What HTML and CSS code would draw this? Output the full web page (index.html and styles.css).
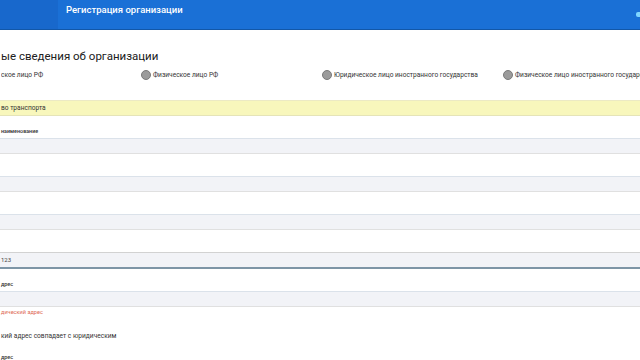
FILE: index.html
```html
<!DOCTYPE html>
<html lang="ru">
<head>
  <meta charset="UTF-8" />
  <meta name="viewport" content="width=device-width, initial-scale=1.0"/>
  <title>Регистрация организации</title>
  <link rel="stylesheet" href="styles.css">
</head>
<body>
  <!-- Header -->
  <div class="topbar">
    <div class="topbar-side"></div>
    <div class="topbar-title">Регистрация организации</div>
    <div class="topbar-user"></div>
  </div>

  <!-- Form -->
  <div class="form">
    <h1 class="form-title">ые сведения об организации</h1>

    <div class="org-types">
      <div class="org-type"><span>ское лицо РФ</span></div>
      <div class="org-type"><span class="radio"></span><span>Физическое лицо РФ</span></div>
      <div class="org-type"><span class="radio"></span><span>Юридическое лицо иностранного государства</span></div>
      <div class="org-type"><span class="radio"></span><span>Физическое лицо иностранного государства</span></div>
    </div>

    <div class="notice">во транспорта</div>

    <div class="field">
      <div class="field-label">наименование</div>
      <div class="field-input"></div>
    </div>

    <div class="field">
      <div class="field-label"></div>
      <div class="field-input"></div>
    </div>

    <div class="field">
      <div class="field-label"></div>
      <div class="field-input"></div>
    </div>

    <div class="field">
      <div class="field-label"></div>
      <div class="field-input focused">123</div>
    </div>

    <div class="field">
      <div class="field-label">дрес</div>
      <div class="field-input"></div>
      <div class="field-error">дический адрес</div>
    </div>

    <div class="same-address">кий адрес совпадает с юридическим</div>

    <div class="field">
      <div class="field-label">дрес</div>
    </div>
  </div>
</body>
</html>
```

FILE: styles.css
```css
* {
  margin: 0;
  padding: 0;
  box-sizing: border-box;
  font-family: 'Roboto', 'Liberation Sans', sans-serif;
}

body {
  background-color: #FFFFFF;
  color: #222;
  overflow: hidden;
}

.topbar {
  display: flex;
  height: 30px;
  background-color: #1a70d6;
  border-bottom: 1px solid #1257a8;
}

.topbar-side {
  width: 58px;
  background-color: #1868cc;
}

.topbar-title {
  padding: 4px 0 0 8px;
  color: #FFFFFF;
  font-size: 9.5px;
  font-weight: 500;
  line-height: 11px;
}

.topbar-user {
  margin: 12px 0 0 auto;
  width: 4px;
  height: 5px;
  background-color: #7fd6ff;
  border-radius: 2px 0 0 2px;
}

.form {
  padding-left: 1px;
}

.form-title {
  margin-top: 17px;
  font-size: 11.5px;
  font-weight: 400;
  color: #202020;
  line-height: 18px;
}

.org-types {
  display: grid;
  grid-template-columns: 140px 181px 181px 1fr;
  height: 18px;
  margin-top: 1px;
  margin-bottom: 16px;
  align-items: center;
  overflow: hidden;
}

.org-type {
  display: flex;
  align-items: center;
  gap: 2px;
  font-size: 6.6px;
  color: #333;
  white-space: nowrap;
}

.radio {
  width: 10px;
  height: 10px;
  border-radius: 50%;
  background-color: #9b9b9b;
  border: 1px solid #7a7a7a;
  flex-shrink: 0;
}

.notice {
  margin-left: -1px;
  padding-left: 1px;
  height: 16px;
  line-height: 14px;
  font-size: 6.6px;
  color: #333;
  background-color: #f8f7bc;
  border-top: 1px solid #eceac4;
  border-bottom: 1px solid #e5e4b8;
}

.field-label {
  height: 22px;
  padding-top: 11px;
  font-size: 5.4px;
  font-weight: 500;
  color: #333;
  line-height: 9px;
}

.field-input {
  margin-left: -1px;
  padding-left: 1px;
  height: 16px;
  background-color: #f2f3f7;
  border-top: 1px solid #dbe2ea;
  border-bottom: 1px solid #e0e0e0;
  font-size: 6px;
  line-height: 14px;
  color: #444;
}

.field-input.focused {
  height: 17px;
  border-top-color: #d2d2d2;
  border-bottom: 2px solid #7e95a6;
}

.field-error {
  height: 10px;
  font-size: 5.6px;
  line-height: 10px;
  color: #e06a55;
}

.same-address {
  margin-top: 14px;
  font-size: 6.6px;
  line-height: 11px;
  color: #333;
}
```
